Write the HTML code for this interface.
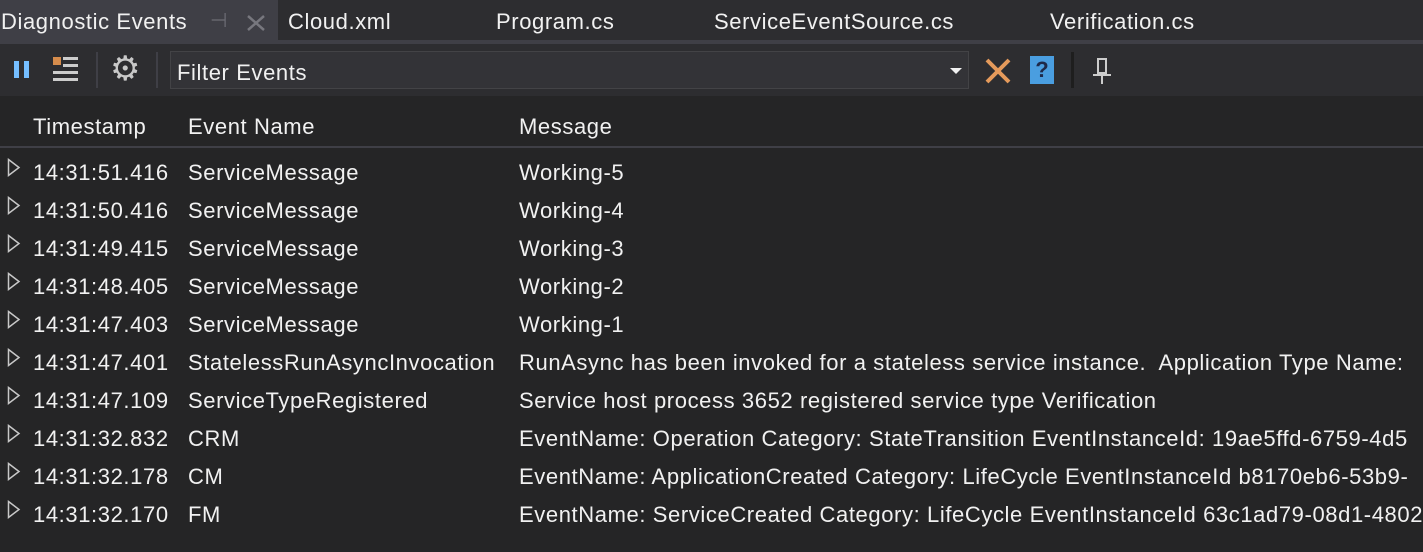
<!DOCTYPE html><html><head><style>
body{margin:0;width:1423px;height:552px;background:#252526;font-family:"Liberation Sans",sans-serif;color:#f1f1f1;overflow:hidden;position:relative}
.a{position:absolute;white-space:nowrap}
.t{font-size:22px;letter-spacing:0.6px}
</style></head><body>
<div class="a" style="left:0;top:0;width:1423px;height:40px;background:#2d2d30"></div>
<div class="a" style="left:0;top:0;width:278px;height:40px;background:#3f3f46"></div>
<div class="a" style="left:0;top:40px;width:1423px;height:4px;background:#3f3f46"></div>
<div class="a t" style="left:1px;top:9px">Diagnostic Events</div>
<div class="a" style="left:210px;top:8px;font-size:20px;color:#6d6d74">⊣</div>
<svg class="a" style="left:246px;top:14px" width="20" height="18"><path d="M2 2L18 16M18 2L2 16" stroke="#77777e" stroke-width="2.5"/></svg>
<div class="a t" style="left:288px;top:9px">Cloud.xml</div>
<div class="a t" style="left:496px;top:9px">Program.cs</div>
<div class="a t" style="left:714px;top:9px">ServiceEventSource.cs</div>
<div class="a t" style="left:1050px;top:9px">Verification.cs</div>
<div class="a" style="left:0;top:44px;width:1423px;height:52px;background:#2d2d30"></div>
<div class="a" style="left:14px;top:61px;width:5px;height:17px;background:#75beff"></div>
<div class="a" style="left:24px;top:61px;width:5px;height:17px;background:#75beff"></div>
<div class="a" style="left:53px;top:57px;width:8px;height:8px;background:#d68c4c"></div>
<div class="a" style="left:63px;top:57px;width:15px;height:3px;background:#ccc"></div>
<div class="a" style="left:63px;top:64px;width:15px;height:3px;background:#ccc"></div>
<div class="a" style="left:53px;top:71px;width:25px;height:3px;background:#ccc"></div>
<div class="a" style="left:53px;top:78px;width:25px;height:3px;background:#ccc"></div>
<div class="a" style="left:96px;top:52px;width:2px;height:36px;background:#3f3f46"></div>
<div class="a" style="left:110px;top:51px;font-size:34px;color:#c8c8c8;line-height:36px">⚙</div>
<div class="a" style="left:156px;top:52px;width:2px;height:36px;background:#3f3f46"></div>
<div class="a" style="left:170px;top:51px;width:797px;height:36px;background:#333337;border:1px solid #434346"></div>
<div class="a t" style="left:177px;top:60px">Filter Events</div>
<div class="a" style="left:950px;top:68px;border-left:6px solid transparent;border-right:6px solid transparent;border-top:6px solid #f1f1f1"></div>
<svg class="a" style="left:985px;top:58px" width="26" height="26"><path d="M2 2L24 24M24 2L2 24" stroke="#e59a5b" stroke-width="4"/></svg>
<div class="a" style="left:1030px;top:56px;width:24px;height:28px;background:#4a9ee0;color:#1e2a4a;font-weight:bold;font-size:22px;text-align:center;line-height:28px">?</div>
<div class="a" style="left:1071px;top:52px;width:3px;height:36px;background:#1e1e1e"></div>
<div class="a" style="left:1097px;top:58px;width:10px;height:16px;border:2px solid #ccc;box-sizing:border-box"></div>
<div class="a" style="left:1093px;top:74px;width:18px;height:2px;background:#ccc"></div>
<div class="a" style="left:1101px;top:76px;width:2px;height:8px;background:#ccc"></div>
<div class="a t" style="left:33px;top:114px">Timestamp</div>
<div class="a t" style="left:188px;top:114px">Event Name</div>
<div class="a t" style="left:519px;top:114px">Message</div>
<div class="a" style="left:0;top:146px;width:1423px;height:2px;background:#3f3f46"></div>
<div id="rows"></div>
<script>
var d=[["14:31:51.416","ServiceMessage","Working-5"],["14:31:50.416","ServiceMessage","Working-4"],["14:31:49.415","ServiceMessage","Working-3"],["14:31:48.405","ServiceMessage","Working-2"],["14:31:47.403","ServiceMessage","Working-1"],["14:31:47.401","StatelessRunAsyncInvocation","RunAsync has been invoked for a stateless service instance.&nbsp; Application Type Name: "],["14:31:47.109","ServiceTypeRegistered","Service host process 3652 registered service type Verification"],["14:31:32.832","CRM","EventName: Operation Category: StateTransition EventInstanceId: 19ae5ffd-6759-4d5"],["14:31:32.178","CM","EventName: ApplicationCreated Category: LifeCycle EventInstanceId b8170eb6-53b9-"],["14:31:32.170","FM","EventName: ServiceCreated Category: LifeCycle EventInstanceId 63c1ad79-08d1-4802"]];
var h="";d.forEach(function(r,i){var y=160+i*38;
h+='<svg class="a" style="left:7px;top:'+(y-2)+'px" width="14" height="20"><path d="M1.5 1.5L12 9.5L1.5 17.5Z" fill="none" stroke="#c8c8c8" stroke-width="1.5"/></svg>';
h+='<div class="a t" style="left:33px;top:'+y+'px">'+r[0]+'</div><div class="a t" style="left:188px;top:'+y+'px">'+r[1]+'</div><div class="a t" style="left:519px;top:'+y+'px">'+r[2]+'</div>';});
document.getElementById("rows").innerHTML=h;
</script>
</body></html>
